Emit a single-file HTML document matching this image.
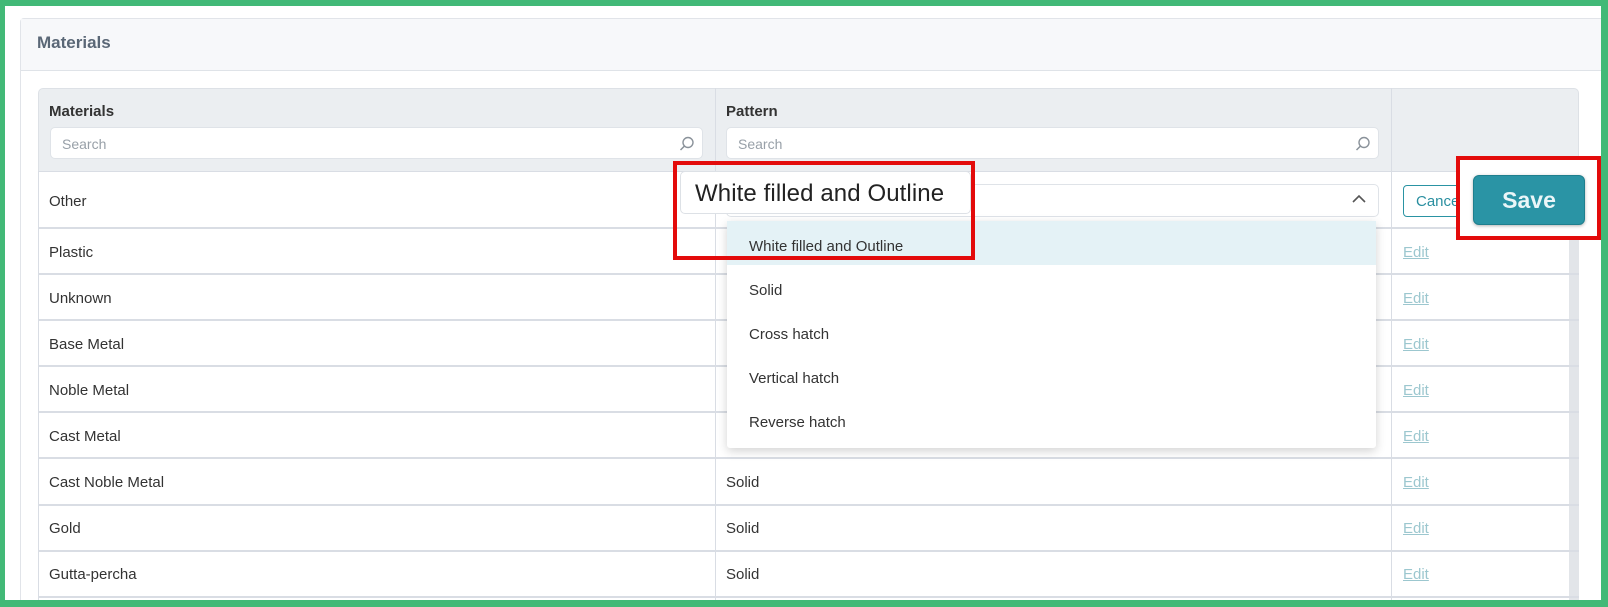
<!DOCTYPE html>
<html><head><meta charset="utf-8"><style>
*{box-sizing:border-box;margin:0;padding:0}
body{width:1608px;height:607px;overflow:hidden;background:#42b977;font-family:"Liberation Sans",sans-serif;position:relative;color:#333}
.abs{position:absolute}
#inner{left:5px;top:6px;width:1596px;height:594px;background:#fff;overflow:hidden}
#panel{left:15px;top:12px;width:1600px;height:600px;background:#fff;border:1px solid #e1e4e9;border-radius:4px}
#phead{left:0;top:0;right:0;height:52px;background:#f7f8fa;border-bottom:1px solid #dfe3e8}
.t{position:absolute;font-size:15px;white-space:nowrap}
.hl{background:#ebeef1}
.line{position:absolute;background:#d9dde4}
.search{position:absolute;height:32px;background:#fff;border:1px solid #dfe3e8;border-radius:5px;font-size:14px;color:#98a0a8;padding:8px 11px}
.edit{position:absolute;font-size:15px;color:#9cc7cf;text-decoration:underline}
</style></head><body>
<div id="inner" class="abs">
 <div id="panel" class="abs"><div id="phead" class="abs"></div></div>
 <div class="t" style="left:32px;top:27px;font-size:17px;font-weight:bold;color:#5a6776">Materials</div>
 <div class="abs hl" style="left:33px;top:82px;width:1541px;height:84px;border:1px solid #dde1e6;border-bottom:none;border-radius:5px 5px 0 0"></div>
 <div class="abs" style="left:33px;top:165px;width:1px;height:440px;background:#d9dde4"></div>
 <div class="line" style="left:710px;top:82px;width:1px;height:520px"></div>
 <div class="line" style="left:1386px;top:82px;width:1px;height:520px"></div>
 <div class="abs" style="left:1564px;top:216px;width:10px;height:400px;background:#e2e5e9"></div>
 <div class="t" style="left:44px;top:97px;font-weight:bold;color:#333;font-size:15px">Materials</div>
 <div class="t" style="left:721px;top:97px;font-weight:bold;color:#333;font-size:15px">Pattern</div>
 <div class="search" style="left:45px;top:121px;width:653px">Search</div>
 <div class="search" style="left:721px;top:121px;width:653px">Search</div>
 <svg class="abs" style="left:674px;top:130px" width="16" height="16"><circle cx="9" cy="6.5" r="5" fill="none" stroke="#8a929a" stroke-width="1.4"/><line x1="5.5" y1="10" x2="1.5" y2="14" stroke="#8a929a" stroke-width="1.5"/></svg>
 <svg class="abs" style="left:1350px;top:130px" width="16" height="16"><circle cx="9" cy="6.5" r="5" fill="none" stroke="#8a929a" stroke-width="1.4"/><line x1="5.5" y1="10" x2="1.5" y2="14" stroke="#8a929a" stroke-width="1.5"/></svg>
 <div class="line" style="left:33px;top:165px;width:1541px;height:1px"></div>
 <div class="line" style="left:33px;top:221px;width:1541px;height:2px"></div>
 <div class="line" style="left:33px;top:267px;width:1541px;height:2px"></div>
 <div class="line" style="left:33px;top:313px;width:1541px;height:2px"></div>
 <div class="line" style="left:33px;top:359px;width:1541px;height:2px"></div>
 <div class="line" style="left:33px;top:405px;width:1541px;height:2px"></div>
 <div class="line" style="left:33px;top:451px;width:1541px;height:2px"></div>
 <div class="line" style="left:33px;top:498px;width:1541px;height:2px"></div>
 <div class="line" style="left:33px;top:544px;width:1541px;height:2px"></div>
 <div class="line" style="left:33px;top:590px;width:1541px;height:2px"></div>
 <div class="t" style="left:44px;top:187px">Other</div>
 <div class="t" style="left:44px;top:238px">Plastic</div>
 <div class="t" style="left:44px;top:284px">Unknown</div>
 <div class="t" style="left:44px;top:330px">Base Metal</div>
 <div class="t" style="left:44px;top:376px">Noble Metal</div>
 <div class="t" style="left:44px;top:422px">Cast Metal</div>
 <div class="t" style="left:44px;top:468px">Cast Noble Metal</div>
 <div class="t" style="left:44px;top:514px">Gold</div>
 <div class="t" style="left:44px;top:560px">Gutta-percha</div>
 <div class="t" style="left:721px;top:468px">Solid</div>
 <div class="t" style="left:721px;top:514px">Solid</div>
 <div class="t" style="left:721px;top:560px">Solid</div>
 <div class="edit" style="left:1398px;top:238px">Edit</div>
 <div class="edit" style="left:1398px;top:284px">Edit</div>
 <div class="edit" style="left:1398px;top:330px">Edit</div>
 <div class="edit" style="left:1398px;top:376px">Edit</div>
 <div class="edit" style="left:1398px;top:422px">Edit</div>
 <div class="edit" style="left:1398px;top:468px">Edit</div>
 <div class="edit" style="left:1398px;top:514px">Edit</div>
 <div class="edit" style="left:1398px;top:560px">Edit</div>
 <div class="abs" style="left:721px;top:178px;width:653px;height:33px;border:1px solid #dfe3e8;border-radius:5px;background:#fff"></div>
 <svg class="abs" style="left:1346px;top:187px" width="16" height="12"><polyline points="2,9 8,3 14,9" fill="none" stroke="#555" stroke-width="1.6"/></svg>
 <div class="abs" style="left:1398px;top:179px;width:70px;height:32px;border:1px solid #2a93a3;border-radius:4px;background:#fff;overflow:hidden"><span style="position:absolute;left:12px;top:7px;font-size:15px;color:#2a8fa0">Cancel</span></div>
 <div class="abs" style="left:722px;top:215px;width:649px;height:227px;background:#fff;border-radius:3px;box-shadow:0 3px 10px rgba(0,0,0,.18)"></div>
 <div class="abs" style="left:722px;top:215px;width:649px;height:44px;background:#e4f2f6"></div>
 <div class="t" style="left:744px;top:232px;font-size:15px">White filled and Outline</div>
 <div class="t" style="left:744px;top:276px">Solid</div>
 <div class="t" style="left:744px;top:320px">Cross hatch</div>
 <div class="t" style="left:744px;top:364px">Vertical hatch</div>
 <div class="t" style="left:744px;top:408px">Reverse hatch</div>
 <div class="abs" style="left:668px;top:155px;width:302px;height:99px;border:4px solid #e30b0b;background:transparent"></div>
 <div class="abs" style="left:675px;top:165px;width:291px;height:43px;background:#fff;border:1px solid #dde1e6;border-radius:5px"></div>
 <div class="t" style="left:690px;top:174px;font-size:24px;letter-spacing:0.1px;color:#222">White filled and Outline</div>
 <div class="abs" style="left:1451px;top:150px;width:145px;height:84px;border:4px solid #e30b0b;background:#fff"></div>
 <div class="abs" style="left:1468px;top:169px;width:112px;height:50px;background:#2a94a5;border:1px solid #1f7f8e;border-radius:6px;box-shadow:0 1px 3px rgba(0,0,0,.3)"></div>
 <div class="t" style="left:1468px;top:181px;width:112px;text-align:center;font-size:23px;font-weight:bold;color:#eaf6f8">Save</div>
</div>
</body></html>
